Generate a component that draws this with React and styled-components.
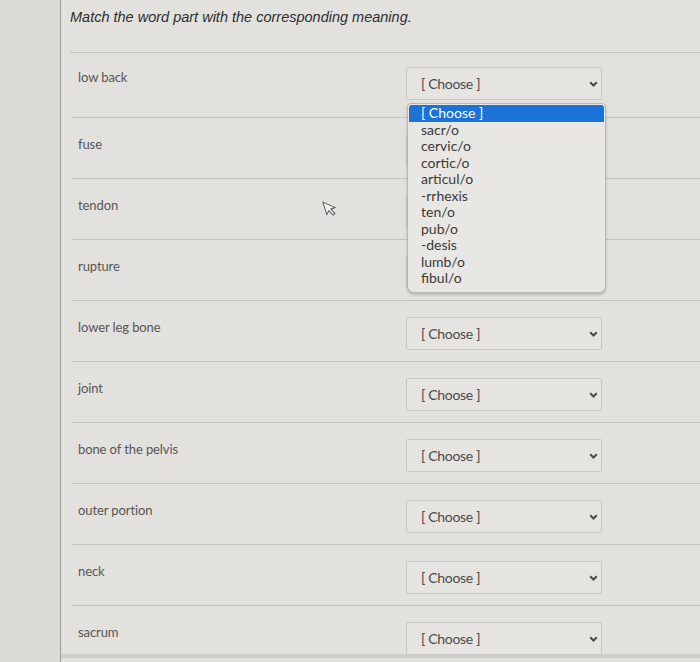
import styled, { createGlobalStyle } from 'styled-components';

const GlobalStyle = createGlobalStyle`
  html, body {
    margin: 0;
    padding: 0;
    background: #dddbd7;
  }
`;

// rows 2-4 sit under the open list, so their placeholders are hidden
const rows = [
  { label: 'low back', open: true },
  { label: 'fuse', covered: true },
  { label: 'tendon', covered: true },
  { label: 'rupture', covered: true },
  { label: 'lower leg bone' },
  { label: 'joint' },
  { label: 'bone of the pelvis' },
  { label: 'outer portion' },
  { label: 'neck' },
  { label: 'sacrum' },
];

const options = [
  'sacr/o', 'cervic/o', 'cortic/o', 'articul/o', '-rrhexis',
  'ten/o', 'pub/o', '-desis', 'lumb/o', 'fibul/o',
];

const Chevron = () => (
  <svg width="9" height="6" viewBox="0 0 9 6">
    <path d="M1.2 1.2 L4.5 4.5 L7.8 1.2" fill="none" stroke="#4a4a4a" strokeWidth="2" />
  </svg>
);

const Cursor = () => (
  <CursorMark width="13" height="18" viewBox="0 0 13 18">
    <path d="M1 1 L1 14 L4.2 11 L6.8 16.5 L9 15.5 L6.5 10 L11 10 Z" fill="#f4f3f0" stroke="#5a5a5a" strokeWidth="1" />
  </CursorMark>
);

const App = () => {
  return (
    <Page>
      <GlobalStyle />
      <Gutter />
      <Main>
        <Title>Match the word part with the corresponding meaning.</Title>
        {rows.map((r, i) => (
          <Row key={r.label} $tall={i === 0}>
            <Label>{r.label}</Label>
            <SelectWrap>
              <Select $covered={r.covered}>
                <span>[ Choose ]</span>
                <Chevron />
              </Select>
              {r.open && (
                <List>
                  <Option $active>[ Choose ]</Option>
                  {options.map((o) => (
                    <Option key={o}>{o}</Option>
                  ))}
                </List>
              )}
            </SelectWrap>
          </Row>
        ))}
      </Main>
      <Cursor />
    </Page>
  );
};

const Page = styled.div`
  position: relative;
  display: flex;
  width: 700px;
  height: 662px;
  overflow: hidden;
  background: #e3e1dd;
`;

const Gutter = styled.div`
  width: 60px;
  flex-shrink: 0;
  background: #dbd9d5;
  border-right: 1px solid #9c9a96;
`;

const Main = styled.div`
  flex: 1;
  padding-left: 11px;
  border-bottom: 4px solid #cfcdc8;
  height: 654px;
`;

const Title = styled.div`
  height: 53px;
  padding-top: 9px;
  box-sizing: border-box;
  margin-left: -2px;
  font-family: 'Liberation Sans', Arial, sans-serif;
  font-style: italic;
  font-size: 14.5px;
  color: #2e2e2e;
  border-bottom: 1px solid #c3c1bd;
`;

const Row = styled.div`
  display: grid;
  grid-template-columns: 334px 196px;
  align-items: start;
  height: ${(p) => (p.$tall ? 65 : 61)}px;
  box-sizing: border-box;
  padding-top: ${(p) => (p.$tall ? 14 : 16)}px;
  border-bottom: 1px solid #c3c1bd;
`;

const Label = styled.div`
  padding-left: 6px;
  padding-top: 2px;
  font-family: Lato, 'Open Sans', sans-serif;
  font-size: 13px;
  letter-spacing: -0.1px;
  color: #565656;
`;

const SelectWrap = styled.div`
  position: relative;
`;

const Select = styled.div`
  display: flex;
  align-items: center;
  justify-content: space-between;
  height: 33px;
  box-sizing: border-box;
  padding: 0 3px 0 14px;
  background: #e6e4e0;
  border: 1px solid #c9c7c3;
  border-radius: 2px;
  font-family: Lato, 'Open Sans', sans-serif;
  font-size: 14px;
  letter-spacing: -0.3px;
  color: #4a4a4a;

  & > * {
    visibility: ${(p) => (p.$covered ? 'hidden' : 'visible')};
  }
`;

const List = styled.div`
  position: absolute;
  z-index: 2;
  top: 36px;
  left: 1px;
  width: 197px;
  padding: 1px 0 5px;
  background: #e9e7e3;
  border: 1px solid #b9b7b3;
  border-radius: 4px 4px 7px 7px;
  box-shadow: 0 2px 3px rgba(0, 0, 0, 0.18);
`;

const Option = styled.div`
  height: 16.5px;
  line-height: 16.5px;
  padding-left: 12px;
  margin: 0 1px;
  font-family: Lato, 'Open Sans', sans-serif;
  font-size: 14px;
  color: ${(p) => (p.$active ? '#fff' : '#3a3a3a')};
  background: ${(p) => (p.$active ? '#1b72d7' : 'transparent')};
  border-radius: ${(p) => (p.$active ? '3px 3px 0 0' : '0')};
`;

const CursorMark = styled.svg`
  position: absolute;
  left: 324px;
  top: 199px;
  transform: rotate(-18deg);
`;

export default App;
